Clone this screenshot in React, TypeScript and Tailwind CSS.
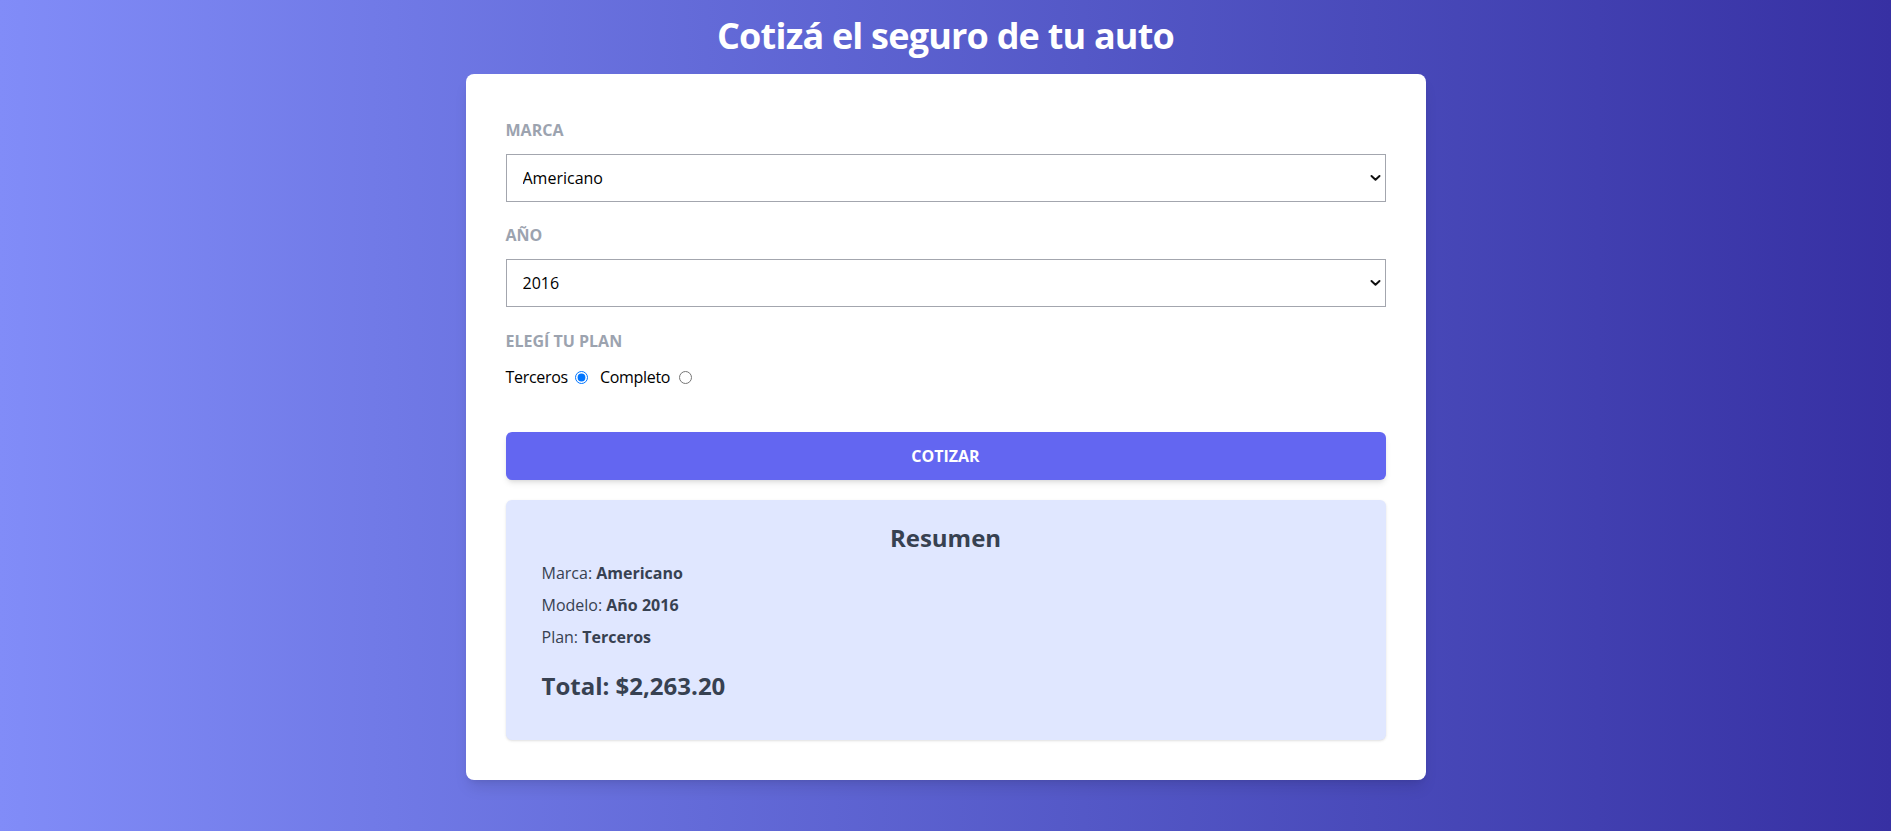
import React from "react";

function Select({ value, options }: { value: string; options: string[] }) {
  return (
    <div className="relative">
      <select
        defaultValue={value}
        className="block w-full h-12 appearance-none border border-[#a3a6ae] bg-white pl-4 pr-8 text-base text-black outline-none"
      >
        {options.map((o) => (
          <option key={o} value={o}>
            {o}
          </option>
        ))}
      </select>
      <svg
        className="pointer-events-none absolute right-[5px] top-1/2 -translate-y-1/2"
        width="11"
        height="7"
        viewBox="0 0 11 7"
      >
        <path d="M1.5 1.5 L5.5 5.2 L9.5 1.5" fill="none" stroke="#111" strokeWidth="2" strokeLinecap="round" strokeLinejoin="round" />
      </svg>
    </div>
  );
}

export default function App() {
  return (
    <div
      className="min-h-[831px] w-full bg-gradient-to-r from-[#818cf8] to-[#3730a3] pt-4 pb-[52px]"
      style={{ fontFamily: '"Open Sans", "Noto Sans", "Liberation Sans", sans-serif' }}
    >
      <h1 className="text-center text-4xl leading-10 font-bold tracking-[-0.8px] text-white">Cotizá el seguro de tu auto</h1>
      <div className="mx-auto mt-[18px] w-[960px] rounded-lg bg-white px-10 pt-11 pb-10 shadow-lg">
        <label className="block text-base leading-6 font-bold uppercase text-[#9ca3af]">Marca</label>
        <div className="mt-3">
          <Select value="Americano" options={["Americano", "Europeo", "Asiático"]} />
        </div>

        <label className="mt-[21px] block text-base leading-6 font-bold uppercase text-[#9ca3af]">Año</label>
        <div className="mt-3">
          <Select value="2016" options={["2016", "2017", "2018", "2019", "2020"]} />
        </div>

        <label className="mt-[22px] block text-base leading-6 font-bold uppercase text-[#9ca3af]">Elegí tu plan</label>
        <div className="mt-3 flex items-center text-base leading-6 tracking-[-0.3px] text-black">
          <span>Terceros</span>
          <input type="radio" name="plan" defaultChecked className="ml-[7px] m-0 h-[13px] w-[13px]" />
          <span className="ml-[12px]">Completo</span>
          <input type="radio" name="plan" className="ml-[9px] m-0 h-[13px] w-[13px]" />
        </div>

        <button className="mt-[43px] block h-12 w-full rounded-md bg-[#6366f1] text-base font-bold uppercase text-white shadow-md">
          Cotizar
        </button>

        <div className="mt-5 h-[240px] rounded-md bg-[#e0e7ff] px-9 pt-[22px] shadow-sm">
          <h2 className="text-center text-2xl leading-8 font-bold text-[#374151]">Resumen</h2>
          <p className="mt-[7px] text-base leading-6 text-[#374151]">
            Marca: <span className="font-bold">Americano</span>
          </p>
          <p className="mt-2 text-base leading-6 text-[#374151]">
            Modelo: <span className="font-bold">Año 2016</span>
          </p>
          <p className="mt-2 text-base leading-6 text-[#374151]">
            Plan: <span className="font-bold">Terceros</span>
          </p>
          <p className="mt-[21px] text-2xl leading-8 font-bold text-[#374151]">Total: $2,263.20</p>
        </div>
      </div>
    </div>
  );
}
